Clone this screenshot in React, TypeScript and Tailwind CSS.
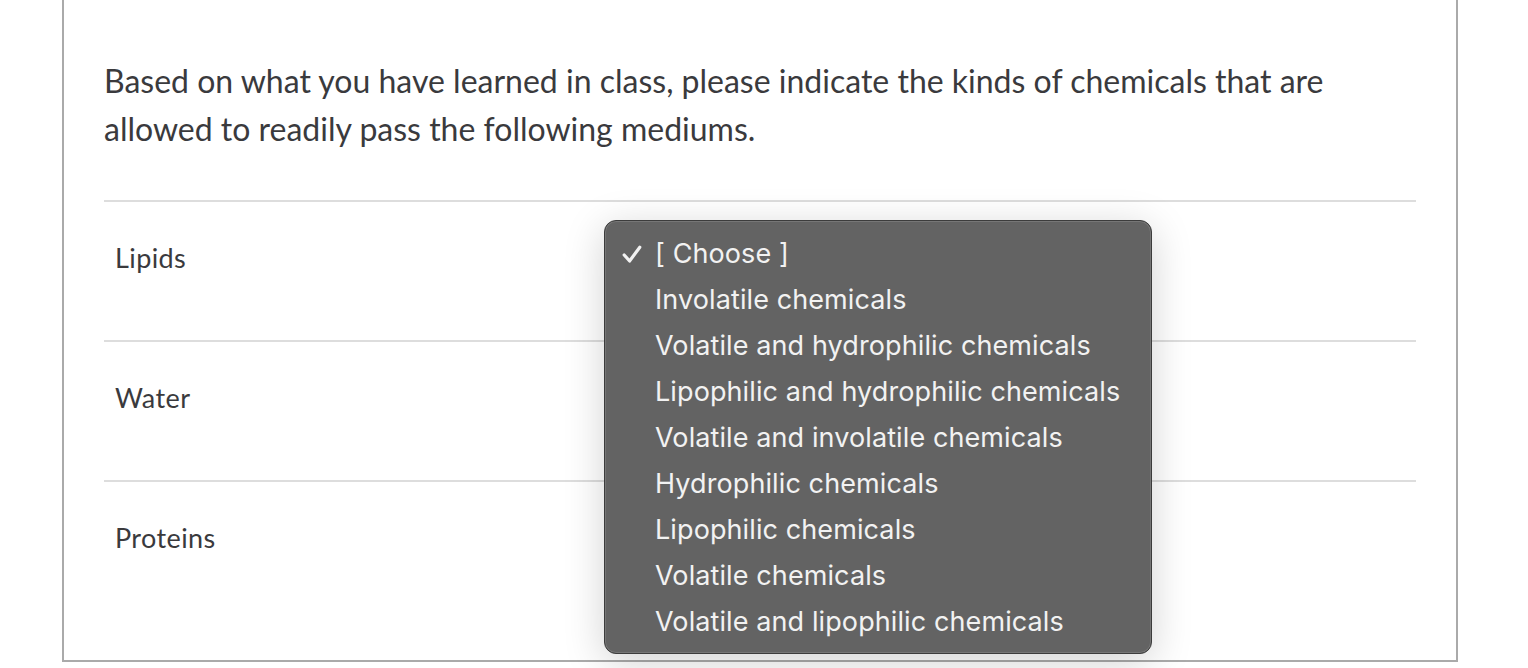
import React from "react";

const options = [
  "[ Choose ]",
  "Involatile chemicals",
  "Volatile and hydrophilic chemicals",
  "Lipophilic and hydrophilic chemicals",
  "Volatile and involatile chemicals",
  "Hydrophilic chemicals",
  "Lipophilic chemicals",
  "Volatile chemicals",
  "Volatile and lipophilic chemicals",
];

const rows = ["Lipids", "Water", "Proteins"];

export default function App() {
  return (
    <div className="w-[1528px] h-[668px] bg-white overflow-hidden relative" style={{ fontFamily: "Lato, 'Noto Sans', sans-serif" }}>
      <div className="ml-[62px] w-[1396px] h-[662px] border-l-2 border-r-2 border-b-2 border-[#aaaaaa] px-[40px] pt-[57px]">
        <p className="text-[32px] leading-[48px] text-[#3a3a3d]">
          Based on what you have learned in class, please indicate the kinds of chemicals that are allowed to readily pass the following mediums.
        </p>
        <div className="mt-[47px]">
          {rows.map((r) => (
            <div key={r} className="h-[140px] border-t-2 border-[#dddddd] pl-[11px] pt-[40px]">
              <span className="text-[27px] leading-[32px] text-[#3a3a3d] tracking-[0.4px]">{r}</span>
            </div>
          ))}
        </div>
      </div>
      <div
        className="absolute left-[604px] top-[220px] w-[548px] h-[434px] rounded-[12px] bg-[#636363] border border-[#3c3c3c] py-[10px] shadow-[0_8px_40px_rgba(0,0,0,0.18),inset_0_0_0_1px_rgba(255,255,255,0.12)]"
        style={{ fontFamily: "Inter, 'Noto Sans', sans-serif" }}
      >
        {options.map((o, i) => (
          <div key={o} className="h-[46px] flex items-center text-[27px] text-[#f2f2f2] tracking-[0.1px]">
            <span className="w-[50px] flex justify-end pr-[13px]">
              {i === 0 && (
                <svg width="20" height="19" viewBox="0 0 20 19">
                  <path d="M2.2 10 L7.6 16 L17.8 2.2" fill="none" stroke="#f2f2f2" strokeWidth="3.2" strokeLinecap="round" strokeLinejoin="round" />
                </svg>
              )}
            </span>
            <span>{o}</span>
          </div>
        ))}
      </div>
    </div>
  );
}
